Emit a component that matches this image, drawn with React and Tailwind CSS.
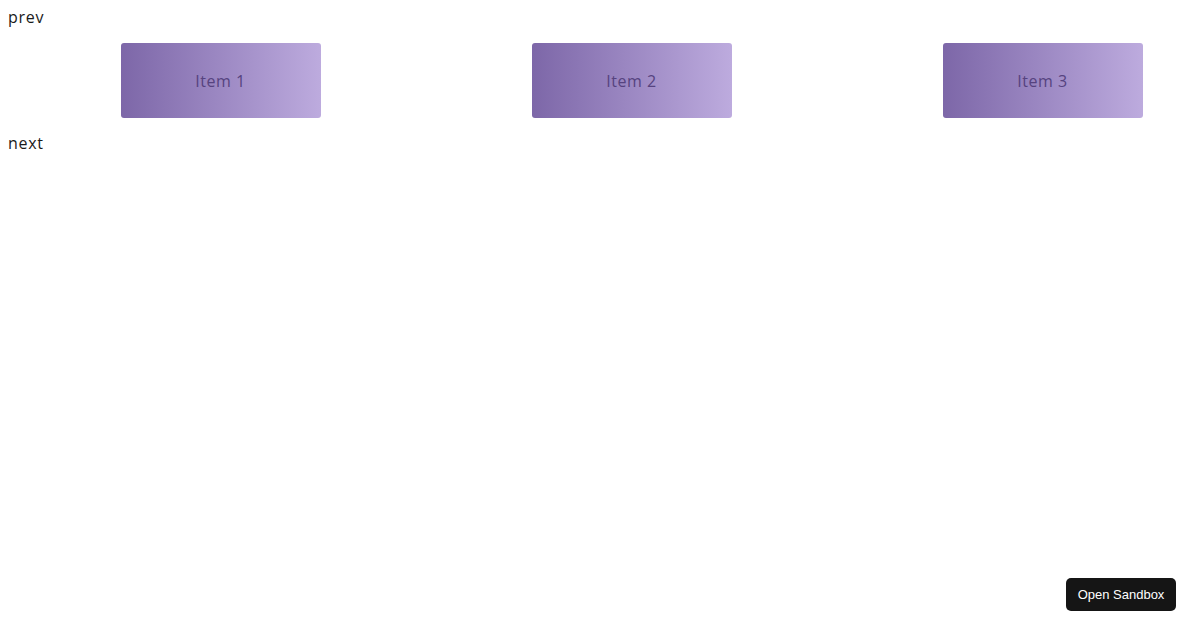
import React from "react";

const items = ["Item 1", "Item 2", "Item 3"];

export default function App() {
  return (
    <div
      className="relative w-[1200px] h-[630px] overflow-hidden bg-white text-[#1a1a1a]"
      style={{ fontFamily: '"Open Sans", "DejaVu Sans", sans-serif' }}
    >
      <div className="pl-2 pt-[5px]">
        <div className="h-6 leading-6 text-[16px] tracking-[0.7px]">prev</div>
      </div>
      <div className="flex mt-[14px] pl-[15px]">
        {items.map((t) => (
          <div key={t} className="w-[411px] shrink-0 flex justify-center">
            <div className="w-[200px] h-[75px] rounded-[3px] bg-gradient-to-r from-[#7d67a8] to-[#bdabde] flex items-center justify-center text-[16px] tracking-[0.5px] text-[#56437f]">
              {t}
            </div>
          </div>
        ))}
      </div>
      <div className="pl-2 mt-[13px]">
        <div className="h-6 leading-6 text-[16px] tracking-[0.7px]">next</div>
      </div>
      <button
        className="absolute right-[24px] bottom-[19px] w-[110px] h-[33px] rounded-[5px] bg-[#151515] text-white text-[13px] flex items-center justify-center"
        style={{ fontFamily: '"Liberation Sans", Arial, sans-serif' }}
      >
        Open Sandbox
      </button>
    </div>
  );
}
